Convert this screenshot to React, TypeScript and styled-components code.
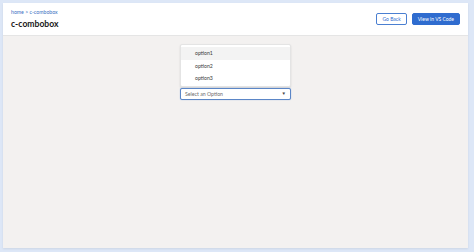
import React from 'react';
import styled, { createGlobalStyle } from 'styled-components';

const GlobalStyle = createGlobalStyle`
  html, body {
    margin: 0;
    padding: 0;
    background: #dde7f7;
    font-family: Lato, "Open Sans", "Liberation Sans", sans-serif;
  }
`;

const Frame = styled.div`
  width: 474px;
  height: 252px;
  box-sizing: border-box;
  padding: 3px 6px 4px 3px;
  background: #dde7f7;
`;

const Page = styled.div`
  height: 100%;
  display: flex;
  flex-direction: column;
  background: #f3f1f0;
  box-shadow: 0 1px 2px rgba(0, 0, 0, 0.08);
`;

const Header = styled.header`
  display: flex;
  justify-content: space-between;
  align-items: center;
  height: 33px;
  box-sizing: border-box;
  padding: 0 8px 0 8px;
  background: #ffffff;
  border-bottom: 1px solid #e5e5e5;
`;

const TitleBlock = styled.div`
  display: flex;
  flex-direction: column;
  gap: 3px;
`;

const Breadcrumb = styled.div`
  font-size: 5.2px;
  color: #3a6fc2;
  line-height: 7px;
`;

const Title = styled.h1`
  margin: 0;
  font-size: 8.6px;
  font-weight: 700;
  color: #181818;
  line-height: 10px;
`;

const Actions = styled.div`
  display: flex;
  gap: 5px;
`;

const Button = styled.button<{ $primary?: boolean }>`
  height: 12px;
  padding: 0 5px;
  border-radius: 2px;
  font-family: inherit;
  font-size: 5px;
  line-height: 10px;
  cursor: pointer;
  border: 1px solid ${({ $primary }) => ($primary ? '#2f6ccf' : '#4a7fd1')};
  background: ${({ $primary }) => ($primary ? '#2f6ccf' : '#ffffff')};
  color: ${({ $primary }) => ($primary ? '#ffffff' : '#2f6ccf')};
`;

const Body = styled.main`
  flex: 1;
  display: flex;
  justify-content: center;
  padding-top: 8px;
`;

const Combo = styled.div`
  width: 111px;
  display: flex;
  flex-direction: column;
  gap: 1px;
`;

const Menu = styled.ul`
  list-style: none;
  margin: 0;
  padding: 2px 0 1px;
  background: #ffffff;
  border: 1px solid #e4e4e4;
  border-radius: 2px;
  box-shadow: 0 1px 2px rgba(0, 0, 0, 0.12);
`;

const Option = styled.li<{ $active?: boolean }>`
  height: 12.5px;
  display: flex;
  align-items: center;
  padding-left: 14px;
  font-size: 5.2px;
  color: #3a3a3a;
  background: ${({ $active }) => ($active ? '#f3f3f3' : 'transparent')};
`;

const Input = styled.div`
  height: 12px;
  box-sizing: border-box;
  display: flex;
  align-items: center;
  justify-content: space-between;
  padding: 0 4px 0 4px;
  background: #ffffff;
  border: 1px solid #5b86c7;
  border-radius: 2px;
  box-shadow: 0 0 1px #6f9ad6;
  font-size: 5.2px;
  color: #6b6b6b;
`;

const Caret = styled.span`
  font-size: 4.5px;
  color: #444;
`;

export default function App() {
  return (
    <>
      <GlobalStyle />
      <Frame>
        <Page>
          <Header>
            <TitleBlock>
              <Breadcrumb>home &gt; c-combobox</Breadcrumb>
              <Title>c-combobox</Title>
            </TitleBlock>
            <Actions>
              <Button>Go Back</Button>
              <Button $primary>View in VS Code</Button>
            </Actions>
          </Header>
          <Body>
            <Combo>
              <Menu>
                <Option $active>option1</Option>
                <Option>option2</Option>
                <Option>option3</Option>
              </Menu>
              <Input>
                <span>Select an Option</span>
                <Caret>▼</Caret>
              </Input>
            </Combo>
          </Body>
        </Page>
      </Frame>
    </>
  );
}
